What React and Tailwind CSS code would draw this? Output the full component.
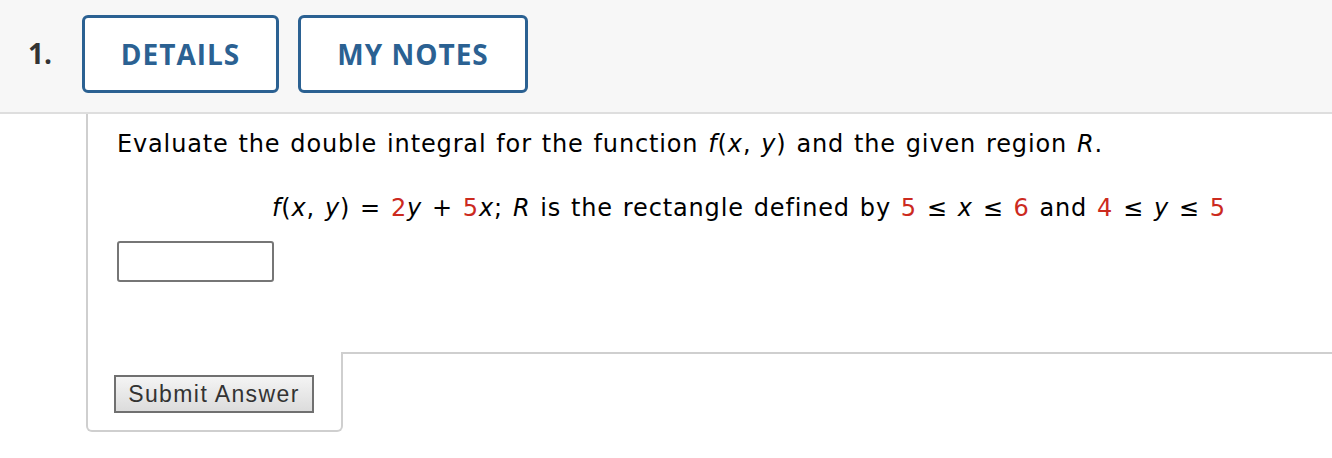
export default function App() {
  const red = "text-[#cc2a1e]";
  return (
    <div className="min-h-[458px] bg-white text-black">
      {/* question header */}
      <div className="flex h-[114px] items-start border-b-2 border-[#dedede] bg-[#f7f7f7] pl-[28px] pt-[15px]">
        <span className="mr-[30px] mt-[18px] font-['Open_Sans',sans-serif] text-[28px] font-bold leading-[40px] text-[#333]">1.</span>
        <div className="flex gap-[19px]">
          <button className="h-[78px] w-[197px] rounded-[6px] border-[3px] border-[#2b6192] bg-white font-['Open_Sans',sans-serif] text-[28px] font-bold tracking-[1px] text-[#2b6192]">
            DETAILS
          </button>
          <button className="h-[78px] w-[230px] rounded-[6px] border-[3px] border-[#2b6192] bg-white font-['Open_Sans',sans-serif] text-[28px] font-bold tracking-[1px] text-[#2b6192]">
            MY NOTES
          </button>
        </div>
      </div>

      {/* question body */}
      <div className="ml-[86px]">
        <div className="h-[238px] border-l-2 border-[#cfcfcf] pl-[29px] pt-[14px] font-['DejaVu_Sans',Verdana,sans-serif] text-[24px] leading-[32px] tracking-[0.85px] [word-spacing:1.4px]">
          <p>
            Evaluate the double integral for the function <i>f</i>(<i>x</i>, <i>y</i>) and the given region <i>R</i>.
          </p>
          <p className="mt-[32px] pl-[155px]">
            <i>f</i>(<i>x</i>, <i>y</i>) = <span className={red}>2</span><i>y</i> + <span className={red}>5</span><i>x</i>; <i>R</i> is the rectangle defined by <span className={red}>5</span> ≤ <i>x</i> ≤ <span className={red}>6</span> and <span className={red}>4</span> ≤ <i>y</i> ≤ <span className={red}>5</span>
          </p>
          <input type="text" className="mt-[17px] block h-[41px] w-[157px] rounded-[3px] border-2 border-[#767676] bg-white" />
        </div>
        <div className="flex">
          <div className="h-[80px] w-[257px] rounded-b-[6px] border-x-2 border-b-2 border-[#cfcfcf] pl-[26px] pt-[23px]">
            <button className="h-[38px] w-[200px] border-2 border-[#707070] bg-gradient-to-b from-[#f4f4f4] to-[#dcdcdc] font-['Liberation_Sans',Arial,sans-serif] text-[23px] tracking-[1.4px] text-[#333]">
              Submit Answer
            </button>
          </div>
          <div className="flex-1 border-t-2 border-[#cfcfcf]" />
        </div>
      </div>
    </div>
  );
}
